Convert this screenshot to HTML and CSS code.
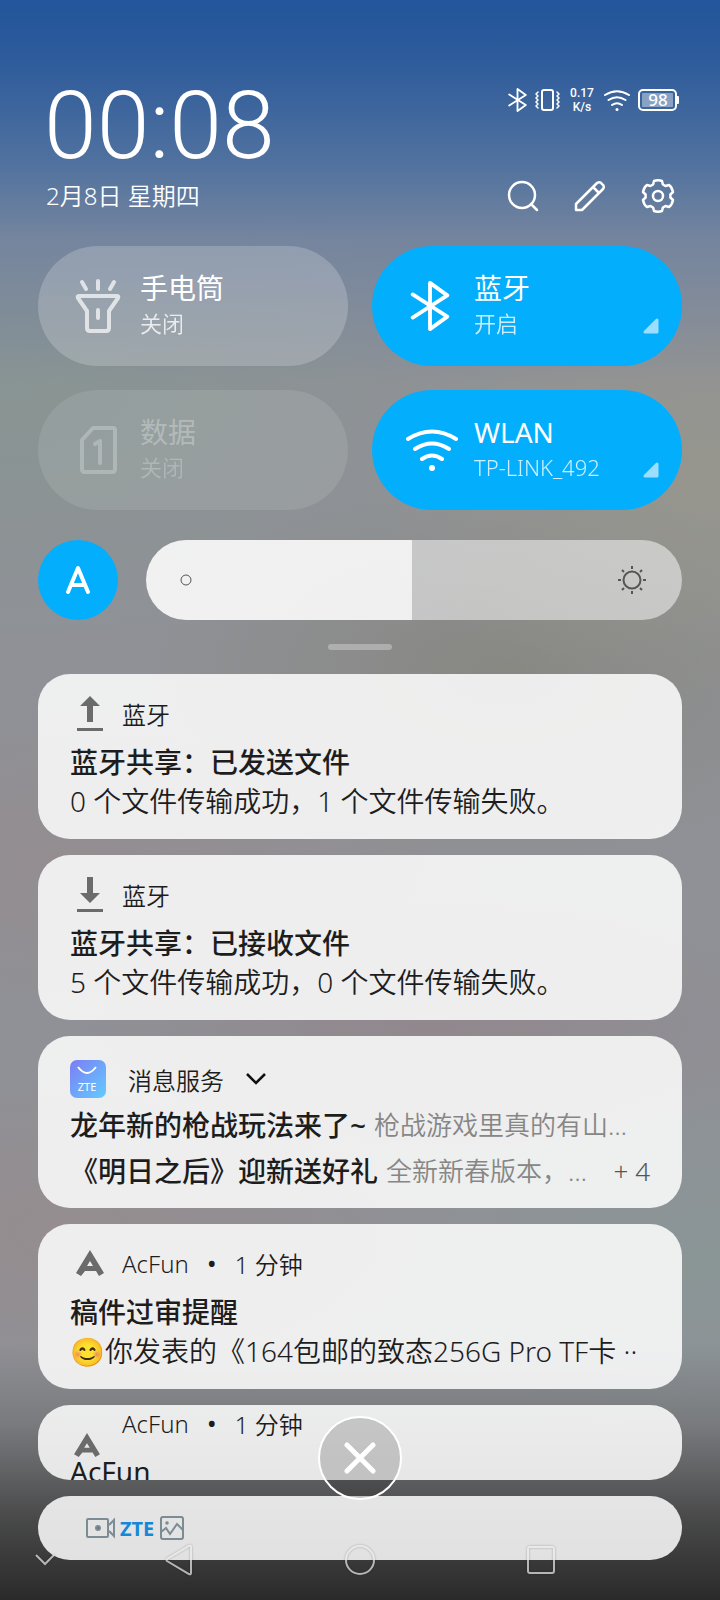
FILE: index.html
```html
<!DOCTYPE html>
<html lang="zh-CN">
<head>
<meta charset="utf-8">
<meta name="viewport" content="width=device-width, initial-scale=1">
<title>通知中心</title>
<link rel="stylesheet" href="styles.css">
</head>
<body>
<svg class="defs" width="0" height="0" aria-hidden="true">
  <symbol id="bt" viewBox="0 0 40 52"><path d="M2 14 38 37 20 50V2L38 15 2 38"/></symbol>
  <symbol id="wifi" viewBox="0 0 52 42"><path d="M2 10Q26-5 50 10M9 20Q26 9 43 20M16 30Q26 23 36 30"/><circle class="dot" cx="26" cy="39" r="3"/></symbol>
  <symbol id="acfun" viewBox="0 0 28 26"><path fill-rule="evenodd" d="M14 0 28 23 23 26 20 21H9L5 26 0 23ZM14 11 11 16H17Z"/></symbol>
</svg>
<main class="screen">
  <header class="top">
    <time class="clock">00:08</time>
    <div class="status">
      <svg class="line" width="19" height="24" stroke-width="4"><use href="#bt"/></svg>
      <svg class="line" width="25" height="22" viewBox="0 0 25 22" stroke-width="2"><rect x="7" y="1" width="11" height="20" rx="2"/><path stroke-width="1.5" d="M3 3 1 5 3 7 1 9 3 11 1 13 3 15 1 17 3 19M22 3 24 5 22 7 24 9 22 11 24 13 22 15 24 17 22 19"/></svg>
      <span class="speed"><span>0.17</span><span>K/s</span></span>
      <svg class="line" width="26" height="21" stroke-width="4"><use href="#wifi"/></svg>
      <svg class="battery" width="42" height="22" viewBox="0 0 42 22"><rect x="1" y="1" width="37" height="20" rx="4" fill="none" stroke="#fff" stroke-width="2"/><rect x="4" y="4" width="31" height="14" rx="1" fill="#fff" opacity=".4"/><path d="M39 7h1q1 0 1 1v6q0 1-1 1h-1z" fill="#fff"/><text x="20" y="17" text-anchor="middle">98</text></svg>
    </div>
    <span class="date">2月8日 星期四</span>
    <div class="actions">
      <button aria-label="搜索"><svg class="line" width="32" height="32" viewBox="0 0 32 32" stroke-width="2.5"><circle cx="15" cy="15" r="13"/><path d="m24 24 6 6"/></svg></button>
      <button aria-label="编辑"><svg class="line" width="32" height="32" viewBox="0 0 32 32" stroke-width="2.5"><path d="M2 24 23 3Q26 1 28 4 31 6 29 9L8 30H2ZM19 7 25 13"/></svg></button>
      <button aria-label="设置"><svg class="line" width="34" height="34" viewBox="-17 -17 34 34" stroke-width="2.5"><path d="M4.9-11.5 7.5-10 11-11Q14-9 15-4L12.4-1.5V1.5L15 4Q14 9 11 11L7.5 10 4.9 11.5 4 15Q0 16.500-4 15L-4.900 11.500-7.500 10-11 11Q-14 9-15 4L-12.400 1.500V-1.500L-15-4Q-14-9-11-11L-7.500-10-4.900-11.500-4-15Q0-16.500 4-15Z"/><circle r="5"/></svg></button>
    </div>
  </header>

  <section class="tiles">
    <button class="tile">
      <svg class="line pale" width="52" height="56" viewBox="0 0 52 56" stroke-width="4"><path d="M10 4 14 11M26 3V11M42 4 38 11M7 18H45Q47 18 46 20L37 33V50Q37 53 34 53H18Q15 53 15 50V33L6 20Q5 18 7 18ZM26 32V40"/></svg>
      <span class="label"><b>手电筒</b><small>关闭</small></span>
    </button>
    <button class="tile on">
      <svg class="line" width="48" height="50" stroke-width="4"><use href="#bt"/></svg>
      <span class="label wide"><b>蓝牙</b><small>开启</small></span>
      <svg class="corner" width="16" height="16" viewBox="0 0 16 16"><path d="M2 14 14 2V14Z"/></svg>
    </button>
    <button class="tile off" disabled>
      <svg class="line" width="52" height="50" viewBox="0 0 52 50" stroke-width="4"><path d="M21 3H41Q43 3 43 5V44Q43 47 40 47H13Q10 47 10 44V15ZM23 19 28 16V38"/></svg>
      <span class="label"><b>数据</b><small>关闭</small></span>
    </button>
    <button class="tile on">
      <svg class="line" width="52" height="42" stroke-width="4"><use href="#wifi"/></svg>
      <span class="label"><b>WLAN</b><small>TP-LINK_492</small></span>
      <svg class="corner" width="16" height="16" viewBox="0 0 16 16"><path d="M2 14 14 2V14Z"/></svg>
    </button>
  </section>

  <section class="brightness">
    <button class="auto" aria-label="自动亮度"><svg class="line" width="26" height="30" viewBox="0 0 26 30" stroke-width="4"><path d="M3 27 13 3 23 27M7 20H19"/></svg></button>
    <div class="slider">
      <input type="range" min="0" max="1000" value="496" aria-label="亮度" style="--level:49.6%">
      <svg class="low" width="12" height="12" viewBox="0 0 12 12"><circle cx="6" cy="6" r="5"/></svg>
      <svg class="high" width="28" height="28" viewBox="-14 -14 28 28"><circle r="8.500"/><path d="M0-14V-11M0 14V11M-14 0H-11M14 0H11M-10-10-8-8M10-10 8-8M-10 10-8 8M10 10 8 8"/></svg>
    </div>
  </section>
  <div class="handle"></div>

  <section class="cards">
    <article class="card">
      <header><span class="icon"><svg width="26" height="36" viewBox="0 0 26 36"><path d="M13 1 23 11H16V27H10V11H3ZM0 33H26V36H0Z"/></svg></span>蓝牙</header>
      <h2>蓝牙共享：已发送文件</h2>
      <p>0 个文件传输成功，1 个文件传输失败。</p>
    </article>
    <article class="card">
      <header><span class="icon"><svg width="26" height="36" viewBox="0 0 26 36"><path d="M10 1H16V17H23L13 27 3 17H10ZM0 33H26V36H0Z"/></svg></span>蓝牙</header>
      <h2>蓝牙共享：已接收文件</h2>
      <p>5 个文件传输成功，0 个文件传输失败。</p>
    </article>
    <article class="card group">
      <header>
        <svg class="app" width="36" height="38" viewBox="0 0 36 38"><defs><linearGradient id="g" x1="0" y1="0" x2="1" y2="1"><stop offset="0" stop-color="#7c7df4"/><stop offset="1" stop-color="#62ccff"/></linearGradient></defs><rect width="36" height="38" rx="7" fill="url(#g)"/><path d="M8 7Q17 19 26 7" fill="none" stroke="#fff" stroke-width="2"/><text x="17" y="31" text-anchor="middle">ZTE</text></svg>
        消息服务
        <button aria-label="展开"><svg width="20" height="12" viewBox="0 0 20 12"><path d="M1 1 10 10 19 1"/></svg></button>
      </header>
      <div class="row"><h2>龙年新的枪战玩法来了~</h2><p>枪战游戏里真的有山…</p></div>
      <div class="row"><h2>《明日之后》迎新送好礼</h2><p>全新新春版本，…</p><span class="more">+ 4</span></div>
    </article>
    <article class="card">
      <header><span class="icon"><svg width="28" height="26"><use href="#acfun"/></svg></span>AcFun<i>•</i>1 分钟</header>
      <h2>稿件过审提醒</h2>
      <p>😊你发表的《164包邮的致态256G Pro TF卡 ··</p>
    </article>
    <article class="card peek">
      <header><span class="icon"><svg width="26" height="24"><use href="#acfun"/></svg></span>AcFun<i>•</i>1 分钟</header>
      <h2>AcFun</h2>
    </article>
    <article class="card shelf">
      <svg width="30" height="22" viewBox="0 0 30 22"><rect x="1" y="2" width="21" height="18" rx="1"/><path d="M23 8 28 3V19L23 14"/><circle cx="12" cy="11" r="2"/></svg>
      <strong>ZTE</strong>
      <svg width="24" height="24" viewBox="0 0 24 24"><rect x="1" y="1" width="22" height="22" rx="2"/><path d="M1 16 6 12 10 18 17 8 23 14"/><circle cx="7" cy="7" r=".8"/></svg>
    </article>
  </section>

  <footer class="dock">
    <button class="clear" aria-label="全部清除"><svg class="line" width="32" height="32" viewBox="0 0 32 32" stroke-width="5"><path d="M3 3 29 29M29 3 3 29"/></svg></button>
    <nav>
      <button class="hide" aria-label="隐藏"><svg width="20" height="12" viewBox="0 0 20 12"><path d="M1 1 10 10 19 1"/></svg></button>
      <button aria-label="返回"><svg width="28" height="32" viewBox="0 0 28 32"><path d="M2 15 24 2Q26 1 26 3V29Q26 31 24 30L2 17Q1 16 2 15Z"/></svg></button>
      <button aria-label="主页"><svg width="32" height="32" viewBox="0 0 32 32"><circle cx="16" cy="16" r="14"/></svg></button>
      <button aria-label="最近任务"><svg width="28" height="28" viewBox="0 0 28 28"><rect x="1" y="1" width="26" height="26" rx="2"/></svg></button>
    </nav>
  </footer>
</main>
</body>
</html>
```
FILE: styles.css
```css
* { box-sizing: border-box; margin: 0; }
body { font-family: "Noto Sans", "Noto Sans CJK SC", sans-serif; font-weight: 350; color: #fff; }
button { border: 0; padding: 0; background: none; color: inherit; font: inherit; display: flex; align-items: center; text-align: left; }
svg { display: block; flex: none; }
.defs { position: absolute; }
.line { fill: none; stroke: #fff; stroke-linecap: round; stroke-linejoin: round; }
.dot { fill: #fff; stroke: none; }

.screen {
  position: relative;
  min-height: 100vh;
  padding: 80px 38px 40px;
  overflow: hidden;
  background:
    linear-gradient(transparent 84%, rgba(70,70,70,.3) 89%, rgba(60,60,60,.85) 95%, #2a2a2a 100%),
    linear-gradient(#22559b 0, #2f5c9b 4%, #4f719f 10%, rgba(111,130,160,.8) 15%, transparent 24%),
    radial-gradient(70% 16% at 0 24%, rgba(130,152,144,.5), transparent),
    radial-gradient(50% 14% at 100% 30%, rgba(154,152,138,.7), transparent),
    radial-gradient(50% 12% at 70% 42%, rgba(134,134,126,.8), transparent),
    radial-gradient(60% 10% at 10% 54%, rgba(150,140,142,.7), transparent),
    radial-gradient(50% 8% at 60% 64%, rgba(146,132,138,.7), transparent),
    radial-gradient(40% 12% at 100% 79%, rgba(138,150,150,.9), transparent),
    radial-gradient(50% 10% at 10% 77%, rgba(150,140,142,.9), transparent),
    #8f9196;
}

.top { display: grid; grid-template-columns: 1fr auto; padding-left: 6px; }
.clock { font: 300 95px/92px Roboto, sans-serif; }
.status { display: flex; align-items: center; justify-content: flex-end; gap: 8px; height: 40px; padding-right: 2px; }
.speed { display: flex; flex-direction: column; align-items: center; width: 28px; font: 500 12px/14px Roboto, sans-serif; }
.battery text { font: 500 17px "Noto Sans", sans-serif; fill: #fff; }
.date { padding-left: 2px; font-size: 24px; line-height: 48px; }
.actions { display: flex; align-items: center; justify-content: flex-end; gap: 35px; padding-right: 7px; }

.tiles { display: grid; grid-template-columns: 1fr 1fr; gap: 24px; margin-top: 26px; }
.tile { height: 120px; padding: 0 23px 0 34px; gap: 16px; border-radius: 60px; background: rgba(255,255,255,.2); }
.tile.on { background: #03aefc; }
.tile.off { background: rgba(255,255,255,.1); color: rgba(255,255,255,.3); }
.tile.off .line { opacity: .25; }
.pale { opacity: .7; }
.label { display: flex; flex-direction: column; padding-bottom: 6px; }
.label.wide { padding-left: 4px; }
.label b { font-size: 28px; line-height: 40px; font-weight: 400; }
.label small { font-size: 22px; line-height: 30px; opacity: .8; }
.corner { margin: 0 0 32px auto; align-self: flex-end; fill: #9bdeff; stroke: #9bdeff; stroke-width: 3; stroke-linejoin: round; }

.brightness { display: flex; gap: 28px; margin-top: 30px; }
.auto { width: 80px; height: 80px; flex: none; justify-content: center; border-radius: 50%; background: #03aefc; }
.slider { position: relative; flex: 1; }
.slider input { display: block; width: 100%; height: 80px; margin: 0; appearance: none; border-radius: 40px; background: linear-gradient(90deg, rgba(255,255,255,.87) var(--level), rgba(255,255,255,.5) var(--level)); }
.slider input::-webkit-slider-thumb { appearance: none; width: 2px; height: 80px; opacity: 0; }
.slider svg { position: absolute; top: 50%; translate: 0 -50%; fill: none; stroke: #555; pointer-events: none; }
.low { left: 34px; }
.high { right: 36px; stroke-width: 2; }
.handle { width: 64px; height: 6px; margin: 24px auto; border-radius: 3px; background: rgba(255,255,255,.3); }

.cards { display: flex; flex-direction: column; gap: 16px; color: #1d1d1d; }
.card { padding: 20px 32px 19px; border-radius: 32px; background: rgba(255,255,255,.85); overflow: hidden; }
.card header { display: flex; align-items: center; height: 38px; margin-bottom: 10px; font-size: 24px; }
.card h2 { font-size: 28px; line-height: 40px; font-weight: 500; white-space: nowrap; }
.card p { font-size: 28px; line-height: 38px; white-space: nowrap; }
.icon { display: flex; justify-content: center; width: 40px; margin-right: 12px; fill: #6b6b6b; }
.card i { width: 46px; font-style: normal; font-weight: 500; text-align: center; }
.group { padding-bottom: 14px; }
.card.group header { height: 46px; margin: 0; }
.app { margin-right: 22px; }
.app text { font: 11px "Noto Sans", sans-serif; fill: #fff; }
.group button { margin-left: 22px; }
.group button path { fill: none; stroke: #111; stroke-width: 2.5; }
.row { display: flex; align-items: center; gap: 8px; height: 46px; }
.row p { font-size: 26px; color: #868686; }
.more { margin-left: auto; font-size: 26px; color: #555; }
.peek { height: 75px; padding-top: 0; }
.card.peek header { height: 36px; }
.card.peek .icon { height: 0; width: 34px; margin-right: 18px; }
.card.peek .icon svg { margin-top: 10px; }
.card.peek h2 { font-weight: 400; }
.shelf { display: flex; align-items: center; gap: 4px; height: 64px; padding: 0 48px; }
.shelf svg { fill: none; stroke: #7b8c95; stroke-width: 2; }
.shelf circle { fill: #5d7079; }
.shelf strong { margin-right: 2px; font: 700 20px "Noto Sans", sans-serif; color: #1688d8; }

.dock { position: absolute; inset: auto 0 0; }
.clear { width: 84px; height: 84px; margin: 0 auto 20px; justify-content: center; border: 2px solid #fff; border-radius: 50%; background: rgba(0,0,0,.16); }
.dock nav { position: relative; display: flex; justify-content: space-around; align-items: center; height: 80px; padding: 0 90px; }
.dock nav svg { fill: none; stroke: rgba(255,255,255,.65); stroke-width: 2; filter: drop-shadow(0 0 1px rgba(0,0,0,.4)); }
.hide { position: absolute; left: 35px; top: 34px; }
```
